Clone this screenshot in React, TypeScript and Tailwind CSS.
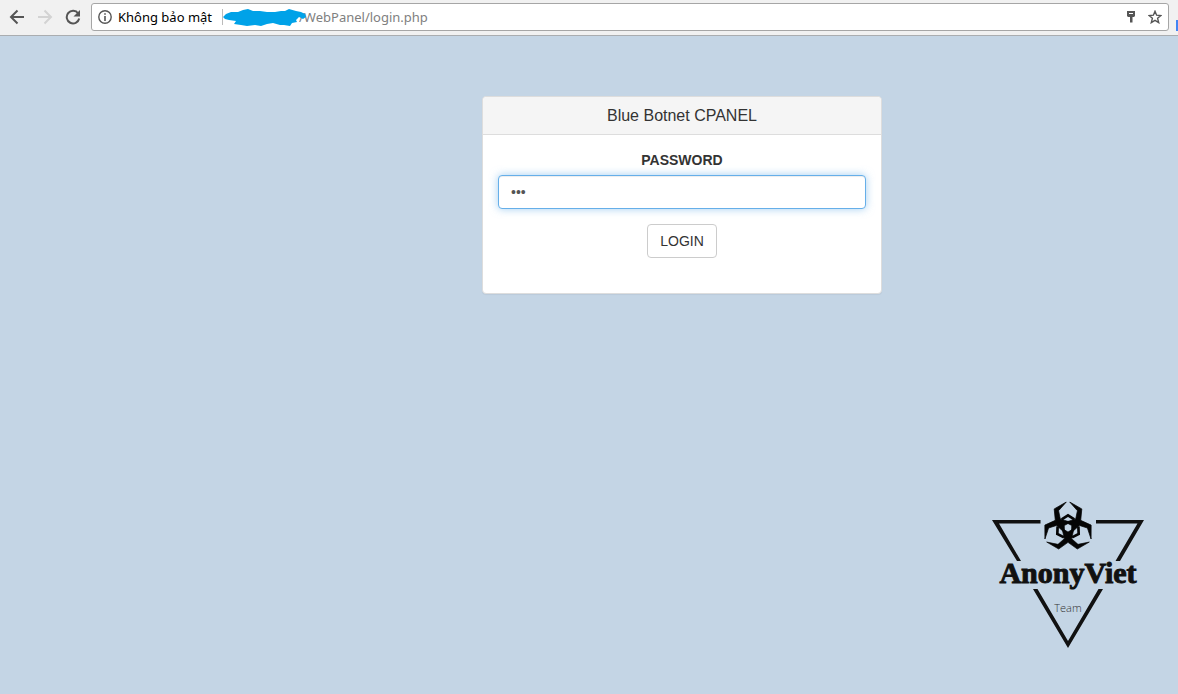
import React from "react";

const iconButton = "flex h-7 w-7 items-center justify-center";

function BackIcon({ className }: { className: string }) {
  return (
    <svg viewBox="0 0 16 16" className={className} fill="none" stroke="currentColor" strokeWidth="2">
      <path d="M15 8H2.5M8.5 1.5 2 8l6.500 6.500" />
    </svg>
  );
}

function ReloadIcon() {
  return (
    <svg viewBox="0 0 16 16" className="h-4 w-4">
      <path d="M13.200 4.500A6.300 6.300 0 1 0 14.200 9.500" fill="none" stroke="#555" strokeWidth="2" />
      <path d="M15 1v6.500H8.500z" fill="#555" />
    </svg>
  );
}

function InfoIcon() {
  return (
    <svg viewBox="0 0 14 14" className="h-3.5 w-3.5 shrink-0">
      <circle cx="7" cy="7" r="6.200" fill="none" stroke="#555" strokeWidth="1.400" />
      <path d="M6.200 3.200h1.600v1.600H6.200zM6.200 6h1.600v5H6.200z" fill="#555" />
    </svg>
  );
}

function KeyIcon() {
  return (
    <svg viewBox="0 0 10 14" className="h-3.5 w-2.5">
      <path fillRule="evenodd" d="M1 1h8V6L8 7H6.500v5.500H4V7H2L1 6zM3 3v1h4V3z" fill="#555" />
    </svg>
  );
}

function StarIcon() {
  return (
    <svg viewBox="0 0 14 14" className="h-3.5 w-3.5">
      <path
        d="M7 1.300 8.600 5.200 12.900 5.500 9.600 8.300 10.700 12.600 7 10.300 3.300 12.600 4.400 8.300 1.100 5.500 5.400 5.200z"
        fill="none"
        stroke="#555"
        strokeWidth="1.400"
      />
    </svg>
  );
}

function Scribble() {
  return (
    <svg viewBox="0 0 84 20" className="h-5 w-[84px]">
      <path
        d="M0 9 3 6 8 4 15 4 20 2 25 1 30 3 37 3 44 4 52 4 58 3 62 3 66 1 73 3 78 4 82 6 83 9 80 11 76 9 73 12 74 14 69 15 67 18 61 17 57 17 50 15 44 16 38 18 32 17 24 18 18 17 11 16 13 13 6 12 2 11z"
        fill="#00a2e8"
      />
    </svg>
  );
}

const claw =
  "M-18 2 0 13 18 2 11 33 30 50 64 43 28 64 0 44-28 64-64 43-30 50-11 33z";

function Logo() {
  return (
    <svg viewBox="0 0 180 170" className="h-[170px] w-[180px]" role="img" aria-label="AnonyViet Team">
      <g fill="#111">
        <path d="M12 30H60.500V33.500H19L41 71H37z" />
        <path d="M116 30H164L140 71H135.500L157.500 33.500H116z" />
        <path d="M53 99H57.500L88 151 118.500 99H123L88 158z" />
      </g>
      <g transform="translate(88 37.700) scale(.3333)" fill="#050505">
        {[0, 120, 240].map((angle) => (
          <path
            key={angle}
            d="M-19-25 0-37 19-25"
            fill="none"
            stroke="#050505"
            strokeWidth="8"
            transform={`rotate(${angle})`}
          />
        ))}
        {[0, 120, 240].map((angle) => (
          <path
            key={angle}
            d={claw}
            stroke="#050505"
            strokeWidth="2"
            transform={`rotate(${angle})`}
          />
        ))}
      </g>
      <text
        x="88"
        y="93"
        textAnchor="middle"
        className="font-['Liberation_Serif',serif] text-[30px] font-bold"
        fill="#111"
        stroke="#111"
        strokeWidth="1"
      >
        AnonyViet
      </text>
      <text x="88" y="122" textAnchor="middle" className="font-['Open_Sans',sans-serif] text-[11px] font-light" fill="#333">
        Team
      </text>
    </svg>
  );
}

function Toolbar() {
  return (
    <header className="flex h-9 items-center border-b border-[#aaadb0] bg-[#f1f1f1] pb-px pl-[3px] font-['Noto_Sans',sans-serif] text-[13px]">
      <button type="button" aria-label="Back" className={iconButton}>
        <BackIcon className="h-4 w-4 text-[#555]" />
      </button>
      <button type="button" aria-label="Forward" className={iconButton}>
        <BackIcon className="h-4 w-4 rotate-180 text-[#d3d3d3]" />
      </button>
      <button type="button" aria-label="Reload" className={iconButton}>
        <ReloadIcon />
      </button>
      <div className="ml-1 flex h-7 flex-1 items-center rounded-[3px] border border-[#a6a6a6] bg-white pl-1.5 pr-px">
        <InfoIcon />
        <span className="ml-1.5 whitespace-nowrap pt-0.5 text-black">Không bảo mật</span>
        <span className="ml-2.5 h-4 w-px bg-[#bbb]" />
        <div className="relative flex flex-1 items-center">
          <input
            aria-label="Address"
            defaultValue="/WebPanel/login.php"
            className="w-full bg-transparent pl-[76px] pt-0.5 text-[#808080] outline-none"
          />
          <span className="pointer-events-none absolute left-0 top-0.5">
            <Scribble />
          </span>
        </div>
        <button type="button" aria-label="Saved passwords" className="flex w-6 justify-center">
          <KeyIcon />
        </button>
        <button type="button" aria-label="Bookmark" className="flex w-6 justify-center">
          <StarIcon />
        </button>
      </div>
      <div className="ml-[7px] mt-4 h-[11px] w-0.5 bg-[#4285f4]" />
    </header>
  );
}

export default function App() {
  return (
    <div className="flex min-h-screen flex-col bg-[#c4d5e5]">
      <Toolbar />
      <main className="flex flex-1 flex-col justify-between pt-[60px] font-['Liberation_Sans',Arial,sans-serif] text-sm text-[#333]">
        <div className="flex justify-center pl-[186px]">
          <section className="w-full max-w-[400px] rounded border border-[#ddd] bg-white text-center shadow-[0_1px_1px_rgba(0,0,0,0.05)]">
            <h1 className="rounded-t border-b border-[#ddd] bg-[#f5f5f5] py-2.5 text-base leading-[17px]">
              Blue Botnet CPANEL
            </h1>
            <form className="px-[15px] pb-[35px] pt-[15px]" onSubmit={(e) => e.preventDefault()}>
              <label htmlFor="password" className="mb-[5px] block font-bold leading-5">
                PASSWORD
              </label>
              <input
                id="password"
                type="password"
                defaultValue="abc"
                autoComplete="off"
                className="block h-[34px] w-full rounded border border-[#66afe9] bg-white px-3 text-[#555] shadow-[inset_0_1px_1px_rgba(0,0,0,0.075),0_0_8px_rgba(102,175,233,0.6)] outline-none"
              />
              <button type="submit" className="mt-[15px] h-[34px] rounded border border-[#ccc] bg-white px-3 leading-5">
                LOGIN
              </button>
            </form>
          </section>
        </div>
        <div className="flex justify-end pb-[34px] pr-[18px]">
          <Logo />
        </div>
      </main>
    </div>
  );
}
